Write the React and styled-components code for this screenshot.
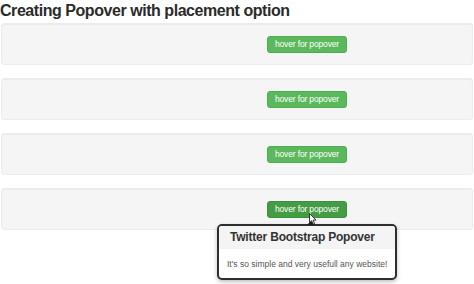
import React from "react";
import styled, { createGlobalStyle } from "styled-components";

const Global = createGlobalStyle`
  html, body { margin: 0; padding: 0; background: #fff; }
  body { font-family: "Liberation Sans", Arial, sans-serif; color: #333; }
`;

const Page = styled.div`
  width: 474px;
  height: 284px;
  overflow: hidden;
`;

const Title = styled.h3`
  margin: 0;
  height: 23px;
  line-height: 21px;
  font-size: 16px;
  font-weight: bold;
  letter-spacing: -0.45px;
  color: #2b2b2b;
  white-space: nowrap;
`;

const Wells = styled.div`
  display: flex;
  flex-direction: column;
  gap: 13px;
  padding: 0 1px 0 1px;
`;

const Well = styled.div`
  position: relative;
  height: 42px;
  box-sizing: border-box;
  background: #f5f5f5;
  border: 1px solid #ececec;
  border-radius: 3px;
  box-shadow: inset 0 1px 1px rgba(0, 0, 0, 0.04);
  display: flex;
  align-items: center;
  padding-left: 265px;
`;

const Button = styled.button`
  width: 80px;
  height: 17px;
  padding: 0;
  box-sizing: border-box;
  border-radius: 3px;
  border: 1px solid ${(p) => (p.$hover ? "#3e8f3e" : "#4cae4c")};
  background: ${(p) => (p.$hover ? "#449d44" : "#5cb85c")};
  color: #fff;
  font-family: "Liberation Sans", Arial, sans-serif;
  font-size: 8.5px;
  letter-spacing: -0.15px;
  line-height: 15px;
  cursor: pointer;
`;

const Popover = styled.div`
  position: absolute;
  left: 215px;
  top: 35px;
  width: 180px;
  height: 56px;
  box-sizing: border-box;
  border: 2px solid #2e2e2e;
  border-radius: 5px;
  background: #fff;
  box-shadow: 0 2px 4px rgba(0, 0, 0, 0.25);
  display: flex;
  flex-direction: column;
  z-index: 2;
`;

const Arrow = styled.div`
  position: absolute;
  top: -5px;
  left: 88px;
  width: 0;
  height: 0;
  border-left: 4px solid transparent;
  border-right: 4px solid transparent;
  border-bottom: 4px solid #1e1e1e;
`;

const PopTitle = styled.div`
  height: 23px;
  background: #f4f4f4;
  border-radius: 3px 3px 0 0;
  padding: 0 0 0 11px;
  font-size: 12px;
  font-weight: bold;
  letter-spacing: -0.2px;
  line-height: 23px;
  color: #333;
  white-space: nowrap;
`;

const PopBody = styled.div`
  flex: 1;
  padding: 0 0 0 8px;
  display: flex;
  align-items: center;
  font-size: 8.5px;
  color: #555;
  white-space: nowrap;
`;

const Cursor = styled.svg`
  position: absolute;
  left: 307px;
  top: 24px;
  z-index: 3;
`;

export default function App() {
  return (
    <Page>
      <Global />
      <Title>Creating Popover with placement option</Title>
      <Wells>
        <Well>
          <Button>hover for popover</Button>
        </Well>
        <Well>
          <Button>hover for popover</Button>
        </Well>
        <Well>
          <Button>hover for popover</Button>
        </Well>
        <Well>
          <Button $hover>hover for popover</Button>
          <Cursor width="8" height="12" viewBox="0 0 8 12">
            <path d="M0.5 0.5 L0.5 9.5 L2.6 7.6 L4.2 11.2 L5.6 10.6 L4.1 7.1 L7 7.1 Z" fill="#fff" stroke="#222" strokeWidth="0.9" strokeLinejoin="round" />
          </Cursor>
          <Popover>
            <Arrow />
            <PopTitle>Twitter Bootstrap Popover</PopTitle>
            <PopBody>It's so simple and very usefull any website!</PopBody>
          </Popover>
        </Well>
      </Wells>
    </Page>
  );
}
